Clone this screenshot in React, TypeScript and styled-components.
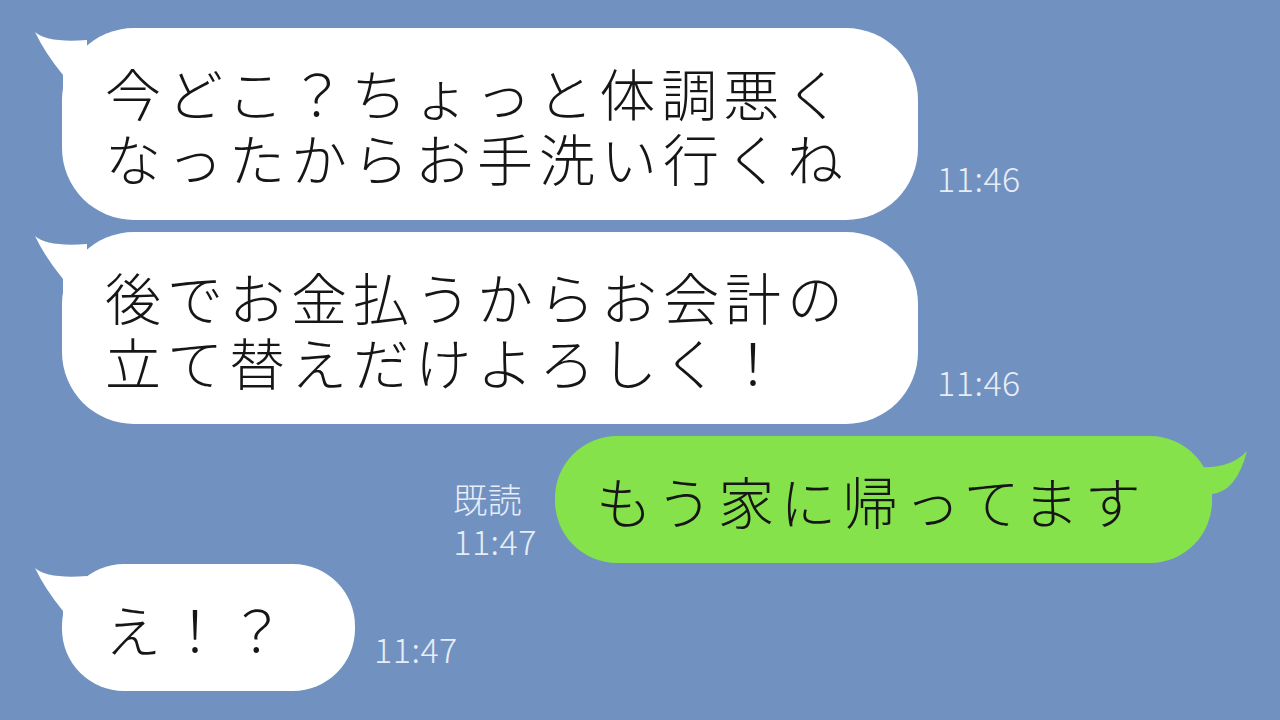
import React from "react";
import styled, { createGlobalStyle } from "styled-components";

const Global = createGlobalStyle`
  html, body {
    margin: 0;
    padding: 0;
    background: #7192c1;
  }
  body {
    width: 1280px;
    height: 720px;
    overflow: hidden;
    font-family: "Noto Sans CJK JP", "Noto Sans", sans-serif;
  }
`;

const Chat = styled.div`
  display: flex;
  flex-direction: column;
  width: 1280px;
  height: 720px;
  padding-top: 28px;
  box-sizing: border-box;
`;

const Row = styled.div<{ $side: "left" | "right"; $gap: number }>`
  display: flex;
  align-items: flex-end;
  justify-content: ${(p) => (p.$side === "left" ? "flex-start" : "flex-end")};
  padding-left: ${(p) => (p.$side === "left" ? "62px" : "0")};
  padding-right: ${(p) => (p.$side === "right" ? "68px" : "0")};
  margin-top: ${(p) => p.$gap}px;
`;

const Bubble = styled.div<{ $mine?: boolean; $width: number; $radius: number }>`
  position: relative;
  box-sizing: border-box;
  width: ${(p) => p.$width}px;
  padding: 31px 0 31px ${(p) => (p.$mine ? 41 : 43)}px;
  background: ${(p) => (p.$mine ? "#85e24a" : "#ffffff")};
  border-radius: ${(p) => p.$radius}px;
`;

const Text = styled.div`
  position: relative;
  z-index: 1;
  font-family: "Noto Sans CJK JP", sans-serif;
  font-weight: 300;
  font-size: 56px;
  line-height: 65px;
  letter-spacing: 6px;
  color: #161616;
  white-space: nowrap;
`;

const Line = styled.div`
  height: 65px;
  overflow: visible;
`;

const Tail = styled.svg<{ $mine?: boolean }>`
  position: absolute;
  top: 0;
  ${(p) => (p.$mine ? "right: -40px;" : "left: -30px;")}
  width: 60px;
  height: 72px;
  overflow: visible;
`;

const Meta = styled.div<{ $side: "left" | "right"; $bottom: number }>`
  display: flex;
  flex-direction: column;
  align-items: flex-start;
  margin: ${(p) =>
    p.$side === "left"
      ? `0 0 ${p.$bottom}px 19px`
      : `0 18px ${p.$bottom}px 0`};
  font-family: "Noto Sans CJK JP", "Noto Sans", sans-serif;
  font-weight: 300;
  font-size: 34px;
  line-height: 42px;
  letter-spacing: 0.5px;
  color: #e6edf7;
`;

const LeftTail = () => (
  <Tail viewBox="-30 0 60 72">
    <path
      d="M -27 4 Q -15 15 25 12 L 25 64 L 1 64 L 1 47 Q -17 25 -27 4 Z"
      fill="#ffffff"
    />
  </Tail>
);

const RightTail = () => (
  <Tail $mine viewBox="-20 0 60 72">
    <path
      d="M 35 15 Q 18.5 33 -14 31 L -14 64 L 0 64 L 0 58 Q 24.5 55.5 35 15 Z"
      fill="#85e24a"
    />
  </Tail>
);

type Msg = {
  side: "left" | "right";
  lines: string[];
  time: string;
  read?: boolean;
  width: number;
  radius: number;
  gap: number;
};

const messages: Msg[] = [
  {
    side: "left",
    lines: ["今どこ？ちょっと体調悪く", "なったからお手洗い行くね"],
    time: "11:46",
    width: 856,
    radius: 72,
    gap: 0,
  },
  {
    side: "left",
    lines: ["後でお金払うからお会計の", "立て替えだけよろしく！"],
    time: "11:46",
    width: 856,
    radius: 72,
    gap: 12,
  },
  {
    side: "right",
    lines: ["もう家に帰ってます"],
    time: "11:47",
    read: true,
    width: 657,
    radius: 62,
    gap: 12,
  },
  {
    side: "left",
    lines: ["え！？"],
    time: "11:47",
    width: 293,
    radius: 62,
    gap: 1,
  },
];

export default function App() {
  return (
    <>
      <Global />
      <Chat>
        {messages.map((m, i) => {
          const bubble = (
            <Bubble $mine={m.side === "right"} $width={m.width} $radius={m.radius}>
              {m.side === "left" ? <LeftTail /> : <RightTail />}
              <Text>
                {m.lines.map((l, j) => (
                  <Line key={j}>{l}</Line>
                ))}
              </Text>
            </Bubble>
          );
          const meta = (
            <Meta $side={m.side} $bottom={m.side === "left" ? 21 : 1}>
              {m.read && <span>既読</span>}
              <span>{m.time}</span>
            </Meta>
          );
          return (
            <Row key={i} $side={m.side} $gap={m.gap}>
              {m.side === "left" ? (
                <>
                  {bubble}
                  {meta}
                </>
              ) : (
                <>
                  {meta}
                  {bubble}
                </>
              )}
            </Row>
          );
        })}
      </Chat>
    </>
  );
}
